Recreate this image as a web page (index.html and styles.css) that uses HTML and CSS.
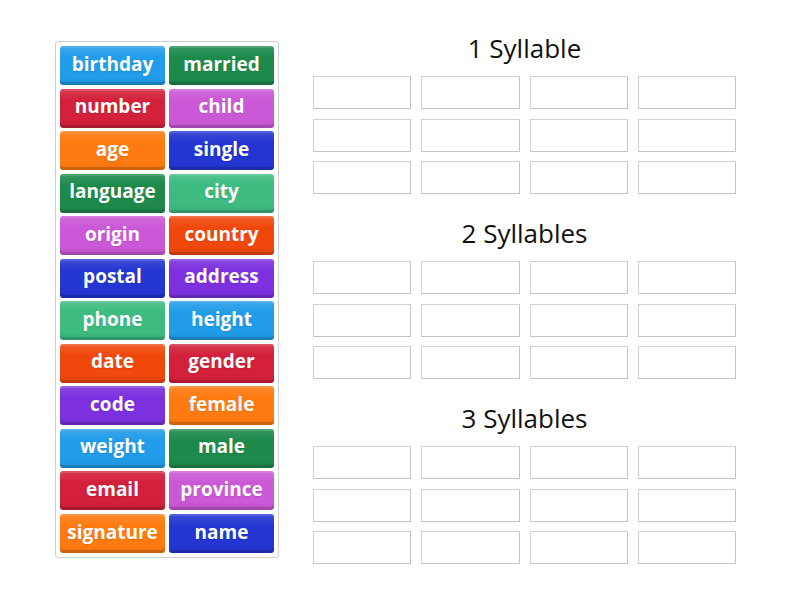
FILE: index.html
```html
<!DOCTYPE html>
<html lang="en">
<head>
    <meta charset="UTF-8">
    <meta name="viewport" content="width=device-width, initial-scale=1.0">
    <title>Syllables - Group sort</title>
    <link rel="stylesheet" href="styles.css">
</head>
<body>

    <div class="activity">
        <div class="word-bank">
            <div class="tile blue">birthday</div>
            <div class="tile green">married</div>
            <div class="tile red">number</div>
            <div class="tile pink">child</div>
            <div class="tile orange">age</div>
            <div class="tile navy">single</div>
            <div class="tile green">language</div>
            <div class="tile mint">city</div>
            <div class="tile pink">origin</div>
            <div class="tile flame">country</div>
            <div class="tile navy">postal</div>
            <div class="tile violet">address</div>
            <div class="tile mint">phone</div>
            <div class="tile blue">height</div>
            <div class="tile flame">date</div>
            <div class="tile red">gender</div>
            <div class="tile violet">code</div>
            <div class="tile orange">female</div>
            <div class="tile blue">weight</div>
            <div class="tile green">male</div>
            <div class="tile red">email</div>
            <div class="tile pink">province</div>
            <div class="tile orange">signature</div>
            <div class="tile navy">name</div>
        </div>

        <div class="groups">
            <div class="group">
                <div class="group-title">1 Syllable</div>
                <div class="slots">
                    <div class="slot"></div><div class="slot"></div><div class="slot"></div><div class="slot"></div>
                    <div class="slot"></div><div class="slot"></div><div class="slot"></div><div class="slot"></div>
                    <div class="slot"></div><div class="slot"></div><div class="slot"></div><div class="slot"></div>
                </div>
            </div>
            <div class="group">
                <div class="group-title">2 Syllables</div>
                <div class="slots">
                    <div class="slot"></div><div class="slot"></div><div class="slot"></div><div class="slot"></div>
                    <div class="slot"></div><div class="slot"></div><div class="slot"></div><div class="slot"></div>
                    <div class="slot"></div><div class="slot"></div><div class="slot"></div><div class="slot"></div>
                </div>
            </div>
            <div class="group">
                <div class="group-title">3 Syllables</div>
                <div class="slots">
                    <div class="slot"></div><div class="slot"></div><div class="slot"></div><div class="slot"></div>
                    <div class="slot"></div><div class="slot"></div><div class="slot"></div><div class="slot"></div>
                    <div class="slot"></div><div class="slot"></div><div class="slot"></div><div class="slot"></div>
                </div>
            </div>
        </div>
    </div>

</body>
</html>
```

FILE: styles.css
```css
body {
    font-family: "Open Sans", Arial, sans-serif;
    margin: 0;
    padding: 0;
    background-color: white;
}

.activity {
    display: flex;
    align-items: flex-start;
    padding: 30px 0 0 55px;
}

.word-bank {
    display: grid;
    grid-template-columns: 105px 105px;
    grid-auto-rows: 39px;
    column-gap: 4px;
    row-gap: 3.55px;
    padding: 4px;
    margin-top: 11px;
    border: 1px solid #d0d0d0;
    border-radius: 3px;
    background-color: white;
}

.tile {
    display: flex;
    align-items: center;
    justify-content: center;
    padding-bottom: 4px;
    box-sizing: border-box;
    border-radius: 3px;
    color: white;
    font-size: 19px;
    font-weight: bold;
    white-space: nowrap;
    background-image: linear-gradient(rgba(255, 255, 255, 0.12), rgba(255, 255, 255, 0) 30%, rgba(0, 0, 0, 0) 80%, rgba(0, 0, 0, 0.08));
    box-shadow: inset 0 -3px 0 rgba(0, 0, 0, 0.14), inset 0 2px 0 rgba(255, 255, 255, 0.12);
    text-shadow: 0 1px 1px rgba(0, 0, 0, 0.1);
}

.blue { background-color: #219ce8; }
.green { background-color: #1d8a4b; }
.red { background-color: #d3203b; }
.pink { background-color: #cb58d6; }
.orange { background-color: #ff7a10; }
.navy { background-color: #2336d2; }
.mint { background-color: #3dbb80; }
.flame { background-color: #f0480c; }
.violet { background-color: #7c30df; }

.groups {
    width: 423px;
    margin-left: 34px;
}

.group {
    margin-bottom: 21px;
}

.group-title {
    font-size: 26px;
    line-height: 36px;
    color: #111;
    text-align: center;
    margin-bottom: 10px;
}

.slots {
    display: grid;
    grid-template-columns: repeat(4, 1fr);
    grid-auto-rows: 33px;
    column-gap: 10px;
    row-gap: 9.5px;
}

.slot {
    border: 1px solid #c4c4c4;
    border-top-color: #d2d2d2;
    border-left-color: #d2d2d2;
    background-color: white;
}
```
